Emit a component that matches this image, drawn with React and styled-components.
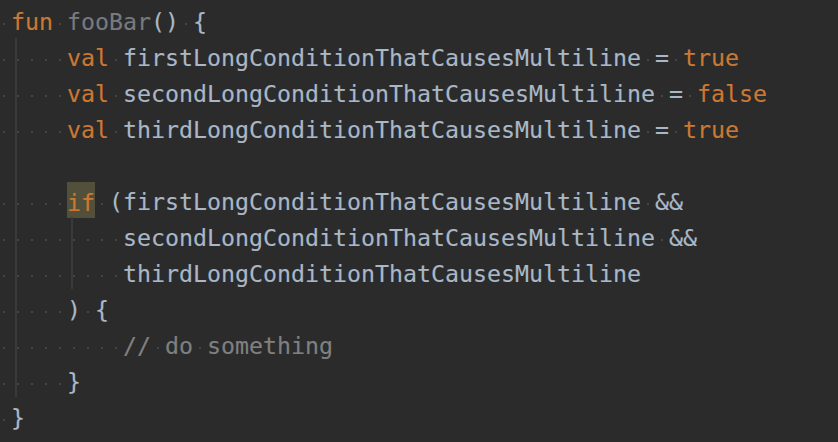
import React from "react";
import styled, { createGlobalStyle } from "styled-components";

const Global = createGlobalStyle`
  html, body { margin: 0; padding: 0; background: #2b2b2b; overflow: hidden; }
  #root { width: 838px; height: 442px; }
`;

const LH = 36;

const Editor = styled.div`
  position: relative;
  width: 838px;
  height: 442px;
  background: #2b2b2b;
  overflow: hidden;
`;

const Code = styled.div`
  margin-left: -3px;
  padding-top: 4px;
  font-family: "DejaVu Sans Mono", monospace;
  font-size: 23.25px;
  line-height: ${LH}px;
  color: #a9b7c6;
  white-space: pre;
  -webkit-text-stroke: 0.15px currentColor;
`;

const Line = styled.div`
  height: ${LH}px;
`;

const colors = {
  kw: "#cc7832",
  id: "#a9b7c6",
  unused: "#787a80",
  comment: "#808080",
};

const Tok = styled.span`
  color: ${(p) => colors[p.$kind] || colors.id};
  background: ${(p) => (p.$hl ? "#52503a" : "transparent")};
  padding: ${(p) => (p.$hl ? "6.5px 0 2.5px 0" : "0")};
`;

const Space = styled.span`
  position: relative;
  &::after {
    content: "";
    position: absolute;
    left: 6px;
    top: 50%;
    margin-top: 1px;
    width: 2px;
    height: 2px;
    border-radius: 1px;
    background: #4e4e4e;
  }
`;

const Guide = styled.div`
  position: absolute;
  width: 2px;
  background: #393939;
  left: ${(p) => p.$left}px;
  top: ${(p) => p.$top}px;
  height: ${(p) => p.$height}px;
`;

const lines = [
  [["ws", " "], ["kw", "fun"], ["ws", " "], ["unused", "fooBar"], ["id", "()"], ["ws", " "], ["id", "{"]],
  [["ws", "     "], ["kw", "val"], ["ws", " "], ["id", "firstLongConditionThatCausesMultiline"], ["ws", " "], ["id", "="], ["ws", " "], ["kw", "true"]],
  [["ws", "     "], ["kw", "val"], ["ws", " "], ["id", "secondLongConditionThatCausesMultiline"], ["ws", " "], ["id", "="], ["ws", " "], ["kw", "false"]],
  [["ws", "     "], ["kw", "val"], ["ws", " "], ["id", "thirdLongConditionThatCausesMultiline"], ["ws", " "], ["id", "="], ["ws", " "], ["kw", "true"]],
  [],
  [["ws", "     "], ["kw", "if", true], ["ws", " "], ["id", "(firstLongConditionThatCausesMultiline"], ["ws", " "], ["id", "&&"]],
  [["ws", "         "], ["id", "secondLongConditionThatCausesMultiline"], ["ws", " "], ["id", "&&"]],
  [["ws", "         "], ["id", "thirdLongConditionThatCausesMultiline"]],
  [["ws", "     "], ["id", ")"], ["ws", " "], ["id", "{"]],
  [["ws", "         "], ["comment", "//"], ["ws", " "], ["comment", "do"], ["ws", " "], ["comment", "something"]],
  [["ws", "     "], ["id", "}"]],
  [["ws", " "], ["id", "}"]],
];

function renderTokens(tokens) {
  return tokens.map(([kind, text, hl], i) => {
    if (kind === "ws") {
      return text.split("").map((c, j) => <Space key={`${i}-${j}`}> </Space>);
    }
    return (
      <Tok key={i} $kind={kind} $hl={hl}>
        {text}
      </Tok>
    );
  });
}

export default function App() {
  return (
    <>
      <Global />
      <Editor>
        <Code>
          {lines.map((tokens, i) => (
            <Line key={i}>{tokens.length ? renderTokens(tokens) : null}</Line>
          ))}
        </Code>
        <Guide $left={15} $top={38} $height={359} />
        <Guide $left={71} $top={217} $height={72} />
      </Editor>
    </>
  );
}
